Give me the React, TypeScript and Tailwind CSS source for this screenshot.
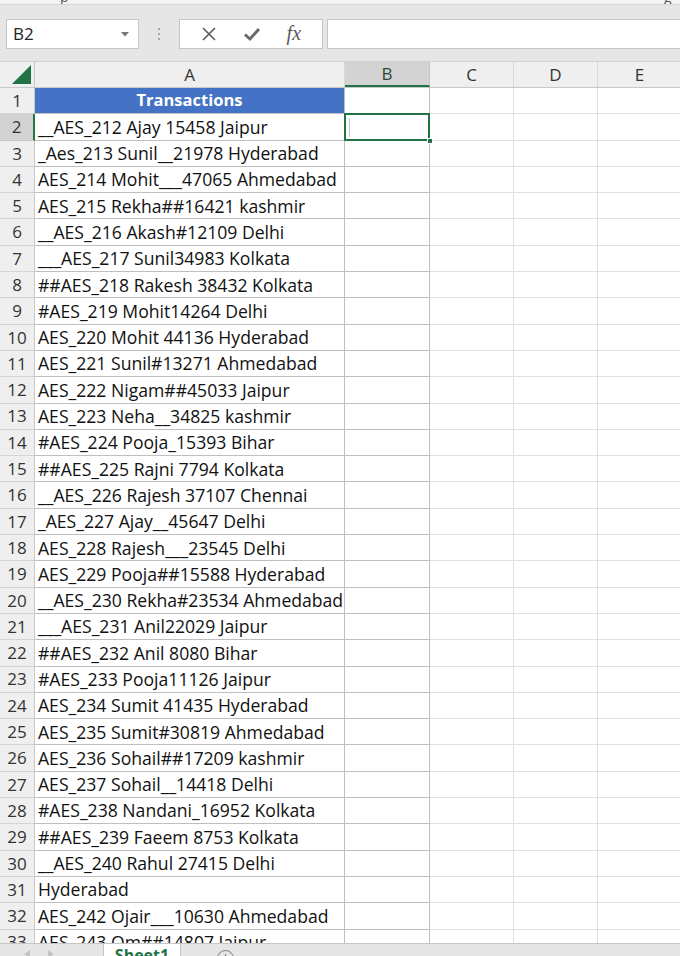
import React from "react";

const rows: string[] = [
  "__AES_212 Ajay 15458 Jaipur",
  "_Aes_213 Sunil__21978 Hyderabad",
  "AES_214 Mohit___47065 Ahmedabad",
  "AES_215 Rekha##16421 kashmir",
  "__AES_216 Akash#12109 Delhi",
  "___AES_217 Sunil34983 Kolkata",
  "##AES_218 Rakesh 38432 Kolkata",
  "#AES_219 Mohit14264 Delhi",
  "AES_220 Mohit 44136 Hyderabad",
  "AES_221 Sunil#13271 Ahmedabad",
  "AES_222 Nigam##45033 Jaipur",
  "AES_223 Neha__34825 kashmir",
  "#AES_224 Pooja_15393 Bihar",
  "##AES_225 Rajni 7794 Kolkata",
  "__AES_226 Rajesh 37107 Chennai",
  "_AES_227 Ajay__45647 Delhi",
  "AES_228 Rajesh___23545 Delhi",
  "AES_229 Pooja##15588 Hyderabad",
  "__AES_230 Rekha#23534 Ahmedabad",
  "___AES_231 Anil22029 Jaipur",
  "##AES_232 Anil 8080 Bihar",
  "#AES_233 Pooja11126 Jaipur",
  "AES_234 Sumit 41435 Hyderabad",
  "AES_235 Sumit#30819 Ahmedabad",
  "AES_236 Sohail##17209 kashmir",
  "AES_237 Sohail__14418 Delhi",
  "#AES_238 Nandani_16952 Kolkata",
  "##AES_239 Faeem 8753 Kolkata",
  "__AES_240 Rahul 27415 Delhi",
  "Hyderabad",
  "AES_242 Ojair___10630 Ahmedabad",
  "AES_243 Om##14807 Jaipur",
];

function Toolbar() {
  return (
    <div className="h-[57px] bg-[#e6e6e6] border-b border-[#d0d0d0] flex items-start pt-[14px] pl-[6px] gap-0">
      {/* name box */}
      <div className="w-[133px] h-[30px] bg-white border border-[#c6c6c6] flex items-center justify-between pl-[6px] pr-[9px]">
        <span className="text-[17px] text-[#222]">B2</span>
        <svg width="8" height="5" viewBox="0 0 8 5">
          <path d="M0 0 L8 0 L4 4.5 Z" fill="#777" />
        </svg>
      </div>
      {/* grip */}
      <div className="w-[40px] h-[30px] flex flex-col items-center justify-center gap-[3px]">
        <div className="w-[2px] h-[2px] bg-[#a8a8a8]" />
        <div className="w-[2px] h-[2px] bg-[#a8a8a8]" />
        <div className="w-[2px] h-[2px] bg-[#a8a8a8]" />
      </div>
      {/* formula buttons */}
      <div className="w-[144px] h-[30px] bg-white border border-[#c6c6c6] flex items-center justify-around px-[8px]">
        <svg width="16" height="16" viewBox="0 0 16 16">
          <path d="M2 2 L14 14 M14 2 L2 14" stroke="#5a5a5a" strokeWidth="1.6" />
        </svg>
        <svg width="18" height="16" viewBox="0 0 18 16">
          <path d="M2 8.5 L7 13 L16 3" stroke="#6a6a6a" strokeWidth="3" fill="none" />
        </svg>
        <span className="text-[20px] italic text-[#5a5a5a] font-['Liberation_Serif',serif] leading-none pb-[2px]">
          fx
        </span>
      </div>
      {/* formula input */}
      <div className="flex-1 h-[30px] bg-white border border-[#c6c6c6] border-r-0 ml-[4px]" />
    </div>
  );
}

function HeaderRow() {
  const cols = [
    { l: "A", w: "w-[310px]", sel: false },
    { l: "B", w: "w-[85px]", sel: true },
    { l: "C", w: "w-[84px]", sel: false },
    { l: "D", w: "w-[84px]", sel: false },
    { l: "E", w: "w-[84px]", sel: false },
  ];
  return (
    <div className="flex h-[26px] shrink-0 bg-[#efefef] border-b border-[#c8c8c8]">
      <div className="w-[35px] shrink-0 border-r border-[#c8c8c8] flex items-end justify-end pr-[3px] pb-[3px]">
        <svg width="19" height="19" viewBox="0 0 19 19">
          <path d="M19 0 L19 19 L0 19 Z" fill="#217346" />
        </svg>
      </div>
      {cols.map((c) => (
        <div
          key={c.l}
          className={
            c.sel
              ? `${c.w} shrink-0 bg-[#d3d3d3] border-r border-[#c8c8c8] border-b-2 border-b-[#217346] flex items-center justify-center text-[17px] text-[#2d4a36]`
              : `${c.w} shrink-0 border-r border-[#d8d8d8] flex items-center justify-center text-[17px] text-[#333]`
          }
        >
          {c.l}
        </div>
      ))}
    </div>
  );
}

function Row({ n, text }: { n: number; text: string }) {
  const header = n === 1;
  const selected = n === 2;
  return (
    <div className="flex h-[26.3px] shrink-0">
      <div
        className={
          selected
            ? "w-[35px] shrink-0 bg-[#d3d3d3] border-b border-[#c8c8c8] border-r-2 border-r-[#217346] flex items-center justify-center text-[17px] text-[#333]"
            : "w-[35px] shrink-0 bg-[#efefef] border-b border-[#d4d4d4] border-r border-r-[#c8c8c8] flex items-center justify-center text-[17px] text-[#333]"
        }
      >
        {n}
      </div>
      {header ? (
        <div className="w-[310px] shrink-0 bg-[#4472c4] border-b border-r border-[#bfbfbf] flex items-center justify-center text-[16.5px] font-bold text-white">
          Transactions
        </div>
      ) : (
        <div className="w-[310px] shrink-0 bg-white border-b border-r border-[#bfbfbf] flex items-center pl-[3px] text-[17.6px] text-[#111] whitespace-nowrap overflow-hidden">
          {text}
        </div>
      )}
      {selected ? (
        <div className="relative w-[85px] shrink-0 border-b border-r border-[#bfbfbf]">
          <div className="absolute -left-[1px] -top-[1px] -right-[1px] -bottom-[1px] border-2 border-[#217346]" />
          <div className="absolute left-[4px] top-[4px] w-[1px] h-[19px] bg-[#c8c8c8]" />
          <div className="absolute -right-[4px] -bottom-[4px] w-[6px] h-[6px] bg-[#217346] border border-white" />
        </div>
      ) : (
        <div className="w-[85px] shrink-0 bg-white border-b border-r border-[#bfbfbf]" />
      )}
      <div className="w-[84px] shrink-0 border-b border-r border-[#e0e0e0]" />
      <div className="w-[84px] shrink-0 border-b border-r border-[#e0e0e0]" />
      <div className="w-[84px] shrink-0 border-b border-r border-[#e0e0e0]" />
    </div>
  );
}

export default function App() {
  return (
    <div className="w-[680px] h-[956px] overflow-hidden bg-white flex flex-col font-['Open_Sans',sans-serif]">
      <div className="h-[5px] shrink-0 bg-[#f3f3f3] border-b border-[#d6d6d6] relative overflow-hidden">
        <span className="absolute left-[60px] -top-[14px] text-[14px] text-[#555]">p</span>
        <span className="absolute left-[664px] -top-[14px] text-[14px] text-[#555]">g</span>
      </div>
      <Toolbar />
      <HeaderRow />
      <div className="flex-1 overflow-hidden flex flex-col">
        <Row n={1} text="" />
        {rows.map((t, i) => (
          <Row key={i} n={i + 2} text={t} />
        ))}
      </div>
      <div className="h-[13px] shrink-0 bg-[#e6e6e6] border-t border-[#c6c6c6] flex items-start overflow-hidden">
        <div className="w-[103px] flex items-start gap-[18px] pl-[24px] pt-[6px]">
          <svg width="6" height="8" viewBox="0 0 6 8">
            <path d="M6 0 L0 4 L6 8 Z" fill="#c4c4c4" />
          </svg>
          <svg width="6" height="8" viewBox="0 0 6 8">
            <path d="M0 0 L6 4 L0 8 Z" fill="#c4c4c4" />
          </svg>
        </div>
        <div className="w-[78px] h-[13px] bg-white border-x border-[#c6c6c6] -mt-[1px] flex justify-center">
          <span className="text-[16px] font-bold text-[#217346] leading-none pt-[4px]">Sheet1</span>
        </div>
        <div className="ml-[36px] mt-[6px] w-[17px] h-[17px] rounded-full border border-[#7a7a7a] flex justify-center">
          <div className="w-[1px] h-[6px] bg-[#7a7a7a] mt-[3px]" />
        </div>
      </div>
    </div>
  );
}
